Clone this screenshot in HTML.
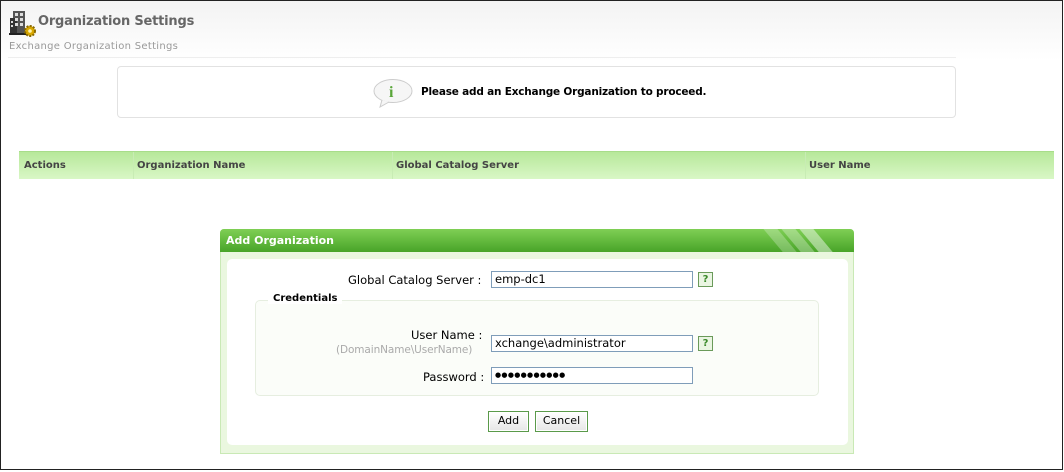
<!DOCTYPE html>
<html><head><style>
*{margin:0;padding:0;box-sizing:border-box}
body{width:1064px;height:472px;background:#fff;font-family:"DejaVu Sans","Liberation Sans",sans-serif;position:relative;overflow:hidden}
.a{position:absolute}
.frame{left:0;top:0;width:1063px;height:470px;border:1px solid #222;}
.t{font-size:11px;color:#000}
.inp{position:absolute;height:17px;border:1px solid #7f9db9;background:#fff;font-size:11.5px;padding-left:3px;line-height:15px}
.q{position:absolute;width:15px;height:15px;border:1px solid #6a9a5a;background:#eaf5e2;color:#3b8a2a;font-size:10px;font-weight:bold;text-align:center;line-height:13px}
.btn{position:absolute;height:21px;border:1px solid #5a9a4a;background:linear-gradient(#fff,#e6e6e6);font-size:11px;text-align:center;line-height:18px;box-shadow:inset 0 0 0 1px #fff}
</style></head><body>
<div class="a frame"></div>
<div class="a" style="left:1px;top:1px;width:1061px;height:60px;background:linear-gradient(#f3f3f3,#fff)"></div>
<svg class="a" style="left:9px;top:10px" width="28" height="28" viewBox="0 0 28 28">
<rect x="4" y="1" width="12" height="22" fill="#555"/><rect x="1" y="8" width="7" height="15" fill="#333"/>
<g fill="#ddd"><rect x="6" y="3" width="3" height="3"/><rect x="11" y="3" width="3" height="3"/><rect x="6" y="8" width="3" height="3"/><rect x="11" y="8" width="3" height="3"/><rect x="6" y="13" width="3" height="3"/><rect x="11" y="13" width="3" height="3"/><rect x="2" y="11" width="2" height="2"/><rect x="2" y="15" width="2" height="2"/></g>
<rect x="0" y="23" width="18" height="2" fill="#222"/>
<circle cx="21" cy="21" r="5" fill="#d9a800" stroke="#8a6a00" stroke-dasharray="2 1.3" stroke-width="2"/><circle cx="21" cy="21" r="1.8" fill="#fff3b0"/>
</svg>
<div class="a" style="left:38px;top:14px;font-size:13px;font-weight:bold;color:#666;letter-spacing:-0.2px">Organization Settings</div>
<div class="a" style="left:9px;top:41px;font-size:10px;color:#999;letter-spacing:0.3px">Exchange Organization Settings</div>
<div class="a" style="left:8px;top:57px;width:948px;height:1px;background:#eee"></div>
<div class="a" style="left:117px;top:66px;width:839px;height:52px;border:1px solid #e2e2e2;border-radius:4px"></div>
<svg class="a" style="left:372px;top:78px" width="44" height="30"><ellipse cx="21" cy="13" rx="19" ry="11.5" fill="#f6f6f6" stroke="#ccc"/><path d="M10 22 L8 29 L17 24" fill="#f6f6f6" stroke="#ccc"/><text x="17" y="19" font-size="16" font-weight="bold" fill="#5aa63a" font-family="Liberation Serif">i</text></svg>
<div class="a" style="left:421px;top:86px;font-size:10.5px;font-weight:bold;letter-spacing:-0.2px">Please add an Exchange Organization to proceed.</div>
<div class="a" style="left:19px;top:151px;width:1035px;height:28px;background:linear-gradient(#b7e89a,#d9f7c6);border-top:1px solid #a8dd8a"></div>
<div class="a" style="left:133px;top:152px;width:1px;height:27px;background:#c8ecb4"></div>
<div class="a" style="left:392px;top:152px;width:1px;height:27px;background:#c8ecb4"></div>
<div class="a" style="left:805px;top:152px;width:1px;height:27px;background:#c8ecb4"></div>
<div class="a t" style="left:24px;top:160px;font-size:10px;font-weight:bold;color:#444">Actions</div>
<div class="a t" style="left:137px;top:160px;font-size:10px;font-weight:bold;color:#444">Organization Name</div>
<div class="a t" style="left:396px;top:160px;font-size:10px;font-weight:bold;color:#444">Global Catalog Server</div>
<div class="a t" style="left:809px;top:160px;font-size:10px;font-weight:bold;color:#444">User Name</div>
<div class="a" style="left:220px;top:229px;width:634px;height:225px;background:#eaf7df;border:1px solid #c9e9b5;border-radius:4px 4px 0 0"></div>
<div class="a" style="left:220px;top:229px;width:634px;height:23px;background:linear-gradient(#7fcf55,#48a428);border-radius:4px 4px 0 0;overflow:hidden">
<div class="a" style="left:556px;top:0;width:14px;height:30px;background:rgba(255,255,255,.25);transform:skewX(40deg)"></div>
<div class="a" style="left:574px;top:0;width:14px;height:30px;background:rgba(255,255,255,.3);transform:skewX(40deg)"></div>
<div class="a" style="left:592px;top:0;width:14px;height:30px;background:rgba(255,255,255,.45);transform:skewX(40deg)"></div>
</div>
<div class="a" style="left:226px;top:234px;font-size:11px;font-weight:bold;color:#fff">Add Organization</div>
<div class="a" style="left:227px;top:259px;width:621px;height:186px;background:#fff;border-radius:5px"></div>
<div class="a t" style="left:348px;top:273px;font-size:11.5px">Global Catalog Server :</div>
<div class="inp" style="left:491px;top:271px;width:202px">emp-dc1</div>
<div class="q" style="left:698px;top:272px">?</div>
<div class="a" style="left:255px;top:300px;width:564px;height:96px;border:1px solid #e6eee0;border-radius:5px;background:#fbfdf9"></div>
<div class="a" style="left:268px;top:293px;background:#fff;padding:0 5px;font-size:10px;font-weight:bold">Credentials</div>
<div class="a t" style="left:411px;top:328px;font-size:11.5px">User Name :</div>
<div class="a" style="left:336px;top:344px;font-size:10.5px;color:#aaa;letter-spacing:-0.1px">(DomainName\UserName)</div>
<div class="inp" style="left:491px;top:335px;width:202px">xchange\administrator</div>
<div class="q" style="left:698px;top:336px">?</div>
<div class="a t" style="left:423px;top:370px;font-size:11.5px">Password :</div>
<div class="inp" style="left:491px;top:367px;width:202px;font-size:7px;letter-spacing:0.3px;line-height:15px">●●●●●●●●●●●</div>
<div class="btn" style="left:488px;top:411px;width:41px">Add</div>
<div class="btn" style="left:535px;top:411px;width:53px">Cancel</div>
</body></html>
